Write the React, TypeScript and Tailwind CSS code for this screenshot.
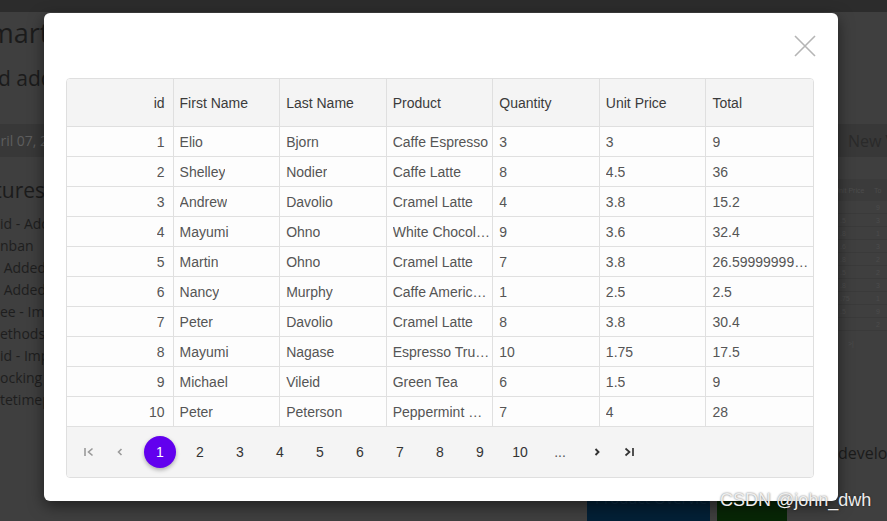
const rows = [
  [1, "Elio", "Bjorn", "Caffe Espresso", 3, 3, 9],
  [2, "Shelley", "Nodier", "Caffe Latte", 8, 4.5, 36],
  [3, "Andrew", "Davolio", "Cramel Latte", 4, 3.8, 15.2],
  [4, "Mayumi", "Ohno", "White Chocolate Mocha", 9, 3.6, 32.4],
  [5, "Martin", "Ohno", "Cramel Latte", 7, 3.8, 26.599999999999998],
  [6, "Nancy", "Murphy", "Caffe Americano", 1, 2.5, 2.5],
  [7, "Peter", "Davolio", "Cramel Latte", 8, 3.8, 30.4],
  [8, "Mayumi", "Nagase", "Espresso Truffle", 10, 1.75, 17.5],
  [9, "Michael", "Vileid", "Green Tea", 6, 1.5, 9],
  [10, "Peter", "Peterson", "Peppermint Mocha Twist", 7, 4, 28],
];

const columns = ["id", "First Name", "Last Name", "Product", "Quantity", "Unit Price", "Total"];

// visible part of the page's feature list behind the dialog
const features = [
  "id - Added",
  "nban",
  " Added c",
  " Added a",
  "ee - Imp",
  "ethods.",
  "id - Imp",
  "ocking la",
  "tetimep",
];

function Background() {
  return (
    <div className="flex flex-col h-full font-['Open_Sans',sans-serif]">
      <div className="h-[12px] bg-[#2c2c2c]" />
      <div className="h-[46px] pt-[3px] -ml-[26px] text-[27px] leading-[36px] text-[#1b1b1b] whitespace-nowrap">
        Smart HTML
      </div>
      <div className="h-[50px] pt-[6px] -ml-[74px] text-[21px] leading-[28px] text-[#1b1b1b] whitespace-nowrap">
        Updated added new
      </div>
      <div className="mt-[16px] h-[33px] bg-[#383838] flex items-center justify-between">
        <span className="-ml-[17px] text-[14px] text-[#5e5e5e] whitespace-nowrap">April 07, 2021</span>
        <span className="w-[39px] overflow-hidden whitespace-nowrap text-[16px] text-[#2a2a2a]">New Version</span>
      </div>
      <div className="flex flex-1">
        <div className="w-[44px] overflow-hidden pt-[19px]">
          <div className="-ml-[40px] text-[21px] leading-[28px] text-[#1b1b1b] whitespace-nowrap">Features</div>
          <div className="mt-[9px] flex flex-col text-[14px] leading-[22px] text-[#1e1e1e] whitespace-pre">
            {features.map((f, i) => (
              <span key={i}>{f}</span>
            ))}
          </div>
        </div>
        <div className="flex-1" />
        <div className="w-[49px] overflow-hidden pt-[22px]">
          <div className="flex flex-col text-[7px] leading-[13px] text-[#4c4c4c] font-['Liberation_Sans',sans-serif]">
            <div className="h-[22px] bg-[#3b3b3b] flex items-center whitespace-nowrap -ml-[4px]">
              <span className="w-[40px]">Unit Price</span>
              <span>To</span>
            </div>
            {["", "4.5", "3.8", "3.6", "3.8", "2.5", "3.8", "1.75", "1.5", ""].map((v, i) => (
              <div key={i} className="h-[13px] border-b border-[#3a3a3a] flex whitespace-nowrap">
                <span className="w-[38px] pl-[2px]">{v ? v.slice(1) : ""}</span>
                <span>{["9", "3", "1", "3", "2", "2", "3", "1", "9", "2"][i]}</span>
              </div>
            ))}
            <div className="h-[24px] pl-[10px] flex items-center">&gt;|</div>
          </div>
          <div className="mt-[86px] text-[16px] text-[#1b1b1b] whitespace-nowrap">development</div>
        </div>
      </div>
      <div className="h-[31px] flex pl-[587px] gap-[7px]">
        <div className="w-[123px] bg-[#032036] text-[#0f2c44] text-[15px] px-[8px] leading-[16px] whitespace-nowrap overflow-hidden">
          Product Overview
        </div>
        <div className="w-[70px] bg-[#072606]" />
      </div>
    </div>
  );
}

function FirstIcon() {
  return (
    <svg width="12" height="12" viewBox="0 0 12 12" fill="none" stroke="#9a9a9a" strokeWidth="1.6">
      <path d="M2 2v8" />
      <path d="M9.5 2.5 5.5 6l4 3.5" />
    </svg>
  );
}

function PrevIcon() {
  return (
    <svg width="10" height="12" viewBox="0 0 10 12" fill="none" stroke="#9a9a9a" strokeWidth="1.6">
      <path d="M6.5 3 3.5 6l3 3" />
    </svg>
  );
}

function NextIcon() {
  return (
    <svg width="10" height="12" viewBox="0 0 10 12" fill="none" stroke="#333" strokeWidth="1.9">
      <path d="M3.5 3 6.5 6l-3 3" />
    </svg>
  );
}

function LastIcon() {
  return (
    <svg width="12" height="12" viewBox="0 0 12 12" fill="none" stroke="#333" strokeWidth="1.7">
      <path d="M2.5 2.5 6.5 6l-4 3.5" />
      <path d="M10 2v8" />
    </svg>
  );
}

function Pager() {
  return (
    <div className="h-[50px] bg-[#f4f4f4] flex items-center pl-[7px] text-[14px] text-[#333]">
      <div className="w-[30px] flex justify-center">
        <FirstIcon />
      </div>
      <div className="w-[32px] flex justify-center">
        <PrevIcon />
      </div>
      <div className="flex items-center gap-[8px] ml-[8px]">
        <div className="w-[32px] h-[32px] rounded-full bg-[#6200ee] text-white flex items-center justify-center shadow-[0_2px_4px_rgba(0,0,0,0.3)]">
          1
        </div>
        {[2, 3, 4, 5, 6, 7, 8, 9, 10].map((n) => (
          <div key={n} className="w-[32px] h-[32px] flex items-center justify-center">
            {n}
          </div>
        ))}
        <div className="w-[32px] h-[32px] flex items-center justify-center text-[#555]">...</div>
      </div>
      <div className="w-[26px] ml-[8px] flex justify-center">
        <NextIcon />
      </div>
      <div className="w-[26px] ml-[6px] flex justify-center">
        <LastIcon />
      </div>
    </div>
  );
}

function DataTable() {
  return (
    <div className="w-[748px] border border-[#dfdfdf] rounded-[4px] overflow-hidden font-['Liberation_Sans',Arial,sans-serif] text-[14px]">
      <div className="grid grid-cols-7 h-[48px] bg-[#f4f4f4] border-b border-[#dfdfdf] text-[#3b3b3b]">
        {columns.map((c, i) => (
          <div
            key={c}
            className={`flex items-center pt-[2px] ${i === 0 ? "justify-end pr-[8px]" : "pl-[6px]"} ${
              i < 6 ? "border-r border-[#dfdfdf]" : ""
            }`}
          >
            {c}
          </div>
        ))}
      </div>
      {rows.map((r) => (
        <div key={r[0]} className="grid grid-cols-7 h-[30px] border-b border-[#e0e0e0] bg-[#fdfdfd] text-[#555]">
          {r.map((v, i) => (
            <div
              key={i}
              className={`flex items-center min-w-0 pt-[2px] ${i === 0 ? "justify-end pr-[8px]" : "pl-[6px] pr-[2px]"} ${
                i < 6 ? "border-r border-[#e0e0e0]" : ""
              }`}
            >
              <span className="truncate">{String(v)}</span>
            </div>
          ))}
        </div>
      ))}
      <Pager />
    </div>
  );
}

export default function App() {
  return (
    <div className="relative w-[887px] h-[521px] overflow-hidden bg-[#3f3f3f]">
      <Background />
      <div className="absolute left-[44px] top-[13px] w-[794px] h-[488px] bg-white rounded-[6px] shadow-[0_5px_15px_rgba(0,0,0,0.5)] flex flex-col px-[22px]">
        <div className="h-[65px] flex justify-end pt-[22px]">
          <svg width="22" height="22" viewBox="0 0 22 22" fill="none" stroke="#b5b5b5" strokeWidth="1.6">
            <path d="M1 1l20 20M21 1 1 21" />
          </svg>
        </div>
        <DataTable />
      </div>
      <div className="absolute left-[720px] top-[487px] text-[18px] text-[#eeeeee] font-['Liberation_Sans',Arial,sans-serif] whitespace-nowrap [text-shadow:0_0_2px_rgba(0,0,0,0.6)]">
        CSDN @john_dwh
      </div>
    </div>
  );
}
